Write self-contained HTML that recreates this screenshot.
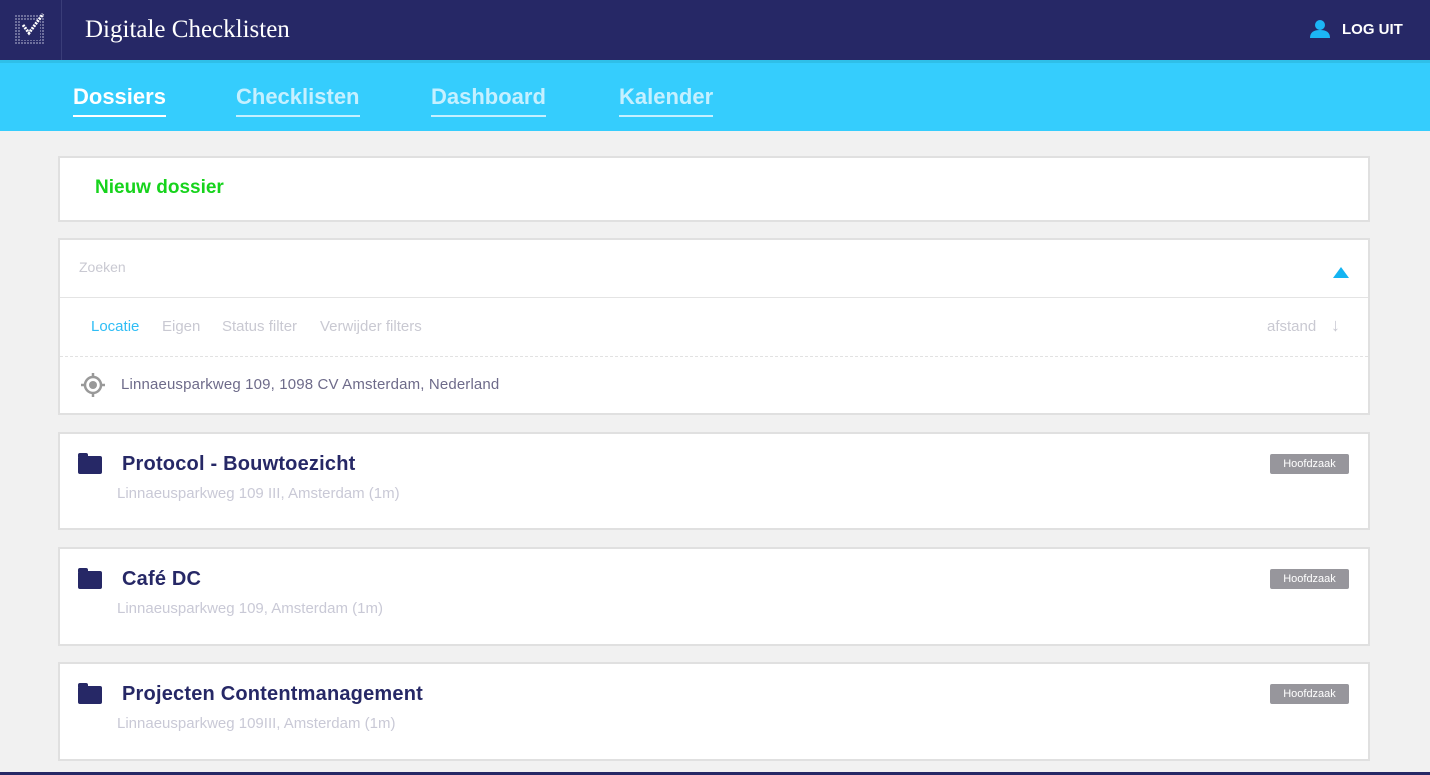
<!DOCTYPE html>
<html><head><meta charset="utf-8"><style>
*{margin:0;padding:0;box-sizing:border-box}
body{width:1430px;height:775px;overflow:hidden;background:#f1f1f1;font-family:"Liberation Sans",sans-serif;position:relative}
.hdr{position:absolute;left:0;top:0;width:1430px;height:60px;background:#262866}
.logo{position:absolute;left:0;top:0;width:62px;height:60px;border-right:1px solid #3a3d78}
.title{position:absolute;left:85px;top:16px;color:#fff;font-family:"Liberation Serif",serif;font-size:25px}
.logout{position:absolute;left:1342px;top:21px;color:#fff;font-size:15px;font-weight:bold}
.nav{position:absolute;left:0;top:60px;width:1430px;height:71px;background:#35cdfd;border-top:3px solid #2fbfe8}
.nav a{position:absolute;top:21px;font-size:22px;font-weight:bold;color:#c5f0ff;padding-bottom:5px;border-bottom:2px solid #c5f0ff;text-decoration:none}
.nav a.on{color:#fff;border-color:#fff}
.card{position:absolute;left:58px;width:1312px;background:#fff;border:2px solid #e0e0e0}
.gray{color:#c9c9d2}
.flt{position:absolute;top:78px;font-size:15px}
.item .f{position:absolute;left:18px;top:22px;width:24px;height:18px;background:#262866;border-radius:2px}
.item .f:before{content:"";position:absolute;left:0;top:-3px;width:10px;height:4px;background:#262866;border-radius:2px 2px 0 0}
.item h2{position:absolute;left:62px;top:19px;font-size:20px;color:#262866;letter-spacing:.2px}
.item p{position:absolute;left:57px;top:51px;font-size:15px;color:#c9c9d6}
.item .b{position:absolute;right:19px;top:20px;width:79px;height:20px;background:#97969c;color:#fff;font-size:11px;text-align:center;line-height:20px;border-radius:2px}
</style></head><body>
<div class="hdr">
<div class="logo"><svg width="62" height="60"><defs><pattern id="d" width="3" height="3" patternUnits="userSpaceOnUse"><rect width="2" height="2" fill="#6d6f9c"/></pattern></defs><rect x="15" y="15" width="30" height="30" fill="url(#d)"/><rect x="20" y="20" width="20" height="20" fill="#262866"/><path d="M23 25l6 8 14-19" stroke="#fff" stroke-width="3" fill="none" stroke-dasharray="2 1"/></svg></div>
<div class="title">Digitale Checklisten</div>
<svg style="position:absolute;left:1310px;top:20px" width="20" height="18"><circle cx="10" cy="5" r="5" fill="#1cb5f5"/><path d="M0 18c0-6 4-8 10-8s10 2 10 8z" fill="#1cb5f5"/></svg>
<div class="logout">LOG UIT</div>
</div>
<div class="nav">
<a class="on" style="left:73px">Dossiers</a><a style="left:236px">Checklisten</a><a style="left:431px">Dashboard</a><a style="left:619px">Kalender</a>
</div>
<div class="card" style="top:156px;height:66px"><div style="position:absolute;left:35px;top:19px;font-size:19px;font-weight:bold;color:#16d31c">Nieuw dossier</div></div>
<div class="card" style="top:238px;height:177px">
<div style="position:absolute;left:19px;top:19px;font-size:14px" class="gray">Zoeken</div>
<div style="position:absolute;right:19px;top:27px;width:0;height:0;border-left:8px solid transparent;border-right:8px solid transparent;border-bottom:11px solid #14b4f2"></div>
<div style="position:absolute;left:0;top:57px;width:100%;border-top:1px solid #e4e4e4"></div>
<div class="flt" style="left:31px;color:#2fbdf5">Locatie</div>
<div class="flt gray" style="left:102px">Eigen</div>
<div class="flt gray" style="left:162px">Status filter</div>
<div class="flt gray" style="left:260px">Verwijder filters</div>
<div class="flt gray" style="left:1207px">afstand</div>
<div style="position:absolute;left:1271px;top:75px;font-size:18px" class="gray">↓</div>
<div style="position:absolute;left:0;top:116px;width:100%;border-top:1px dashed #e2e2e2"></div>
<svg style="position:absolute;left:21px;top:133px" width="24" height="24"><circle cx="12" cy="12" r="8" fill="none" stroke="#999" stroke-width="2.5"/><circle cx="12" cy="12" r="4" fill="#999"/><path d="M12 0v4M12 20v4M0 12h4M20 12h4" stroke="#999" stroke-width="2.5"/></svg>
<div style="position:absolute;left:61px;top:136px;font-size:15px;color:#6e6b8a;letter-spacing:.15px">Linnaeusparkweg 109, 1098 CV Amsterdam, Nederland</div>
</div>
<div class="card item" style="top:432px;height:98px"><div class="f"></div><h2>Protocol - Bouwtoezicht</h2><p>Linnaeusparkweg 109 III, Amsterdam (1m)</p><div class="b">Hoofdzaak</div></div>
<div class="card item" style="top:547px;height:99px"><div class="f"></div><h2>Café DC</h2><p>Linnaeusparkweg 109, Amsterdam (1m)</p><div class="b">Hoofdzaak</div></div>
<div class="card item" style="top:662px;height:99px"><div class="f"></div><h2>Projecten Contentmanagement</h2><p>Linnaeusparkweg 109III, Amsterdam (1m)</p><div class="b">Hoofdzaak</div></div>
<div style="position:absolute;left:0;top:772px;width:1430px;height:3px;background:#262866"></div>
</body></html>
